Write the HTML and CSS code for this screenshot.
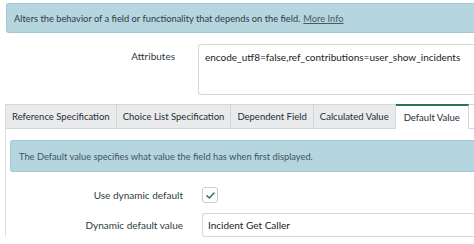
FILE: index.html
```html
<!DOCTYPE html>
<html lang="en">
<head>
  <meta charset="UTF-8" />
  <title>Dictionary Entry</title>
  <link rel="stylesheet" href="styles.css">
</head>
<body>
  <div class="notice top-notice">
    Alters the behavior of a field or functionality that depends on the field. <a href="#">More Info</a>
  </div>

  <div class="form-row attr-row">
    <label class="attr-label">Attributes</label>
    <div class="textarea">encode_utf8=false,ref_contributions=user_show_incidents</div>
  </div>

  <div class="tabs">
    <div class="tab-bar">
      <div class="tab">Reference Specification</div>
      <div class="tab">Choice List Specification</div>
      <div class="tab">Dependent Field</div>
      <div class="tab">Calculated Value</div>
      <div class="tab active">Default Value</div>
      <div class="tab-rest"></div>
    </div>

    <div class="panel">
      <div class="notice panel-notice">The Default value specifies what value the field has when first displayed.</div>

      <div class="form-row check-row">
        <label class="panel-label">Use dynamic default</label>
        <span class="checkbox">
          <svg width="11" height="11" viewBox="0 0 11 11"><path d="M2 5.8 L4.4 8 L9 3" fill="none" stroke="#2f7d5f" stroke-width="1.6" stroke-linecap="round" stroke-linejoin="round"/></svg>
        </span>
      </div>

      <div class="form-row value-row">
        <label class="panel-label">Dynamic default value</label>
        <div class="input">Incident Get Caller</div>
      </div>
    </div>
  </div>
</body>
</html>
```

FILE: styles.css
```css
body {
  margin: 0;
  font-family: Lato, "Liberation Sans", sans-serif;
  font-size: 10px;
  color: #2e3b42;
  background: #fff;
  overflow: hidden;
}

.notice {
  background: #b5d5df;
  border: 1px solid #a5c8d4;
  border-right: none;
  border-radius: 3px 0 0 3px;
  display: flex;
  align-items: center;
  font-size: 9.3px;
}

.top-notice {
  margin: 3px 0 0 6px;
  height: 28px;
  padding-left: 7px;
}

.top-notice a {
  color: #4a5a62;
  margin-left: 3px;
}

.form-row {
  display: flex;
  align-items: center;
}

.attr-row {
  margin-top: 11px;
  align-items: flex-start;
}

.attr-label {
  width: 175px;
  text-align: right;
  padding-top: 6px;
}

.textarea {
  margin-left: 23px;
  flex: 1;
  height: 43px;
  border: 1px solid #d6d8da;
  border-right: none;
  border-radius: 3px 0 0 3px;
  padding: 6px 0 0 6px;
  color: #222;
}

.tabs {
  margin: 9px 0 0 5px;
  border-left: 1px solid #dcdfe1;
}

.tab-bar {
  display: flex;
  border-top: 1px solid #d3d6d9;
  height: 24px;
}

.tab {
  flex-shrink: 0;
  white-space: nowrap;
  background: #e8eaec;
  border-right: 1px solid #d3d6d9;
  border-bottom: 1px solid #d3d6d9;
  padding: 0 6px;
  display: flex;
  align-items: center;
  font-size: 9.5px;
  color: #262e33;
}

.tab.active {
  background: #fff;
  border-bottom-color: #fff;
  border-top: 2px solid #2e6e5c;
  margin-top: -1px;
  padding: 0 8px;
}

.tab-rest {
  flex: 1;
  border-bottom: 1px solid #d3d6d9;
}

.panel {
  padding: 11px 0 0 4px;
}

.panel-notice {
  height: 30px;
  padding-left: 8px;
  color: #3c5560;
}

.panel-label {
  width: 173px;
  text-align: right;
}

.check-row {
  margin-top: 15px;
}

.checkbox {
  margin-left: 19px;
  width: 14px;
  height: 14px;
  border: 1px solid #c9cdd0;
  border-radius: 3px;
  display: flex;
  align-items: center;
  justify-content: center;
}

.value-row {
  margin-top: 10px;
}

.input {
  margin-left: 19px;
  flex: 1;
  height: 22px;
  border: 1px solid #d6d8da;
  border-right: none;
  border-radius: 3px 0 0 3px;
  padding-left: 5px;
  display: flex;
  align-items: center;
  color: #222;
}
```
